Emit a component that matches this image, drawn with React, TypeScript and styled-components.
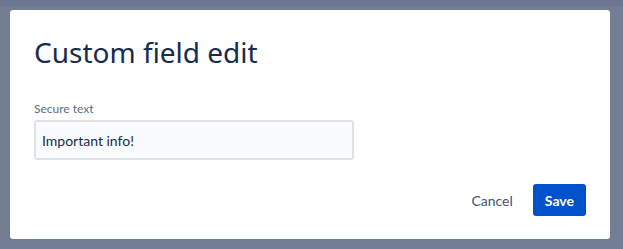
import React, { useState } from "react";
import styled, { createGlobalStyle } from "styled-components";

const GlobalStyle = createGlobalStyle`
  html, body {
    margin: 0;
    padding: 0;
    height: 100%;
  }
  body {
    font-family: Lato, "Noto Sans", sans-serif;
    color: #172b4d;
  }
  #root {
    height: 100%;
  }
`;

const Blanket = styled.div`
  box-sizing: border-box;
  width: 623px;
  height: 249px;
  padding: 10px 13px 10px 10px;
  background: linear-gradient(#6c7690 0, #6c7690 6px, #737e94 6px);
`;

const Modal = styled.div`
  box-sizing: border-box;
  width: 600px;
  height: 229px;
  background: #ffffff;
  border-radius: 3px;
  padding: 24px 24px 23px;
  display: flex;
  flex-direction: column;
`;

const Title = styled.h1`
  margin: 0;
  font-family: "Noto Sans", "Open Sans", sans-serif;
  font-size: 28px;
  line-height: 36px;
  font-weight: 400;
  color: #172b4d;
`;

const Body = styled.div`
  margin-top: 31px;
  display: flex;
  flex-direction: column;
`;

const Label = styled.label`
  font-size: 12px;
  line-height: 16px;
  font-weight: 400;
  color: #5e6c84;
  margin-bottom: 3px;
`;

const Input = styled.input`
  box-sizing: border-box;
  width: 320px;
  height: 40px;
  border: 2px solid #dfe1e6;
  border-radius: 3px;
  background: #fafbfc;
  padding: 0 6px;
  font-family: inherit;
  font-size: 14px;
  color: #172b4d;
  outline: none;
`;

const Footer = styled.div`
  margin-top: auto;
  display: flex;
  justify-content: flex-end;
  gap: 8px;
`;

const Button = styled.button<{ primary?: boolean }>`
  height: 32px;
  padding: 0 12px;
  border: none;
  border-radius: 3px;
  font-family: inherit;
  font-size: 14px;
  font-weight: ${(p) => (p.primary ? 700 : 400)};
  background: ${(p) => (p.primary ? "#0052cc" : "transparent")};
  color: ${(p) => (p.primary ? "#ffffff" : "#42526e")};
  cursor: pointer;
`;

const App: React.FC = () => {
  const [value, setValue] = useState("Important info!");

  return (
    <>
      <GlobalStyle />
      <Blanket>
        <Modal>
          <Title>Custom field edit</Title>
          <Body>
            <Label>Secure text</Label>
            <Input value={value} onChange={(e) => setValue(e.target.value)} />
          </Body>
          <Footer>
            <Button>Cancel</Button>
            <Button primary>Save</Button>
          </Footer>
        </Modal>
      </Blanket>
    </>
  );
};

export default App;
